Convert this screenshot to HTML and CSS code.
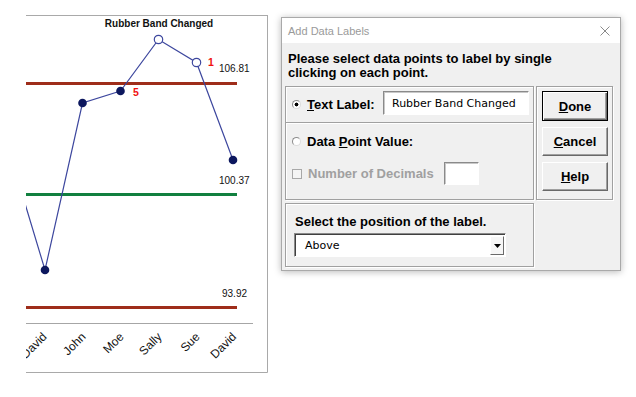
FILE: index.html
```html
<!DOCTYPE html>
<html>
<head>
<meta charset="utf-8">
<link rel="stylesheet" href="styles.css">
</head>
<body>
<svg class="chart" width="278" height="397" viewBox="0 0 278 397">
  <defs>
    <clipPath id="plot"><rect x="26" y="0" width="250" height="397"/></clipPath>
  </defs>
  <g class="frame">
    <line x1="26" y1="15.5" x2="267.5" y2="15.5"/>
    <line x1="267.5" y1="15" x2="267.5" y2="372.5"/>
    <line x1="26" y1="372.5" x2="267.5" y2="372.5"/>
  </g>
  <text class="title" x="159" y="27" text-anchor="middle">Rubber Band Changed</text>
  <line class="limit" x1="26" y1="83.5" x2="237" y2="83.5"/>
  <line class="center" x1="26" y1="194.5" x2="237" y2="194.5"/>
  <line class="limit" x1="26" y1="307.5" x2="237" y2="307.5"/>
  <line class="axis" x1="26" y1="323.5" x2="253" y2="323.5"/>
  <g clip-path="url(#plot)">
    <polyline class="series" points="7.4,145 45,270 82.5,103 120.5,91 158.5,39.5 196.5,62.5 233,160"/>
    <circle class="pt" cx="45" cy="270" r="4.3"/>
    <circle class="pt" cx="82.5" cy="103" r="4.3"/>
    <circle class="pt" cx="120.5" cy="91" r="4.3"/>
    <circle class="pt open" cx="158.5" cy="39.5" r="4.2"/>
    <circle class="pt open" cx="196.5" cy="62.5" r="4.2"/>
    <circle class="pt" cx="233" cy="160" r="4.3"/>
    <g class="xlabels">
      <text transform="translate(47.5,337.5) rotate(-45)" text-anchor="end">David</text>
      <text transform="translate(86.5,337.5) rotate(-45)" text-anchor="end">John</text>
      <text transform="translate(124.5,337.5) rotate(-45)" text-anchor="end">Moe</text>
      <text transform="translate(162.5,337.5) rotate(-45)" text-anchor="end">Sally</text>
      <text transform="translate(200.5,337.5) rotate(-45)" text-anchor="end">Sue</text>
      <text transform="translate(237,337.5) rotate(-45)" text-anchor="end">David</text>
    </g>
  </g>
  <text class="mark" x="208" y="66">1</text>
  <text class="mark" x="133" y="96">5</text>
  <text class="val" x="219" y="72">106.81</text>
  <text class="val" x="219" y="184">100.37</text>
  <text class="val" x="222" y="297">93.92</text>
</svg>

<div class="dialog">
  <div class="titlebar">
    <span class="title-text">Add Data Labels</span>
    <svg class="close" width="10" height="10" viewBox="0 0 10 10"><path d="M0.5 0.5 L9.5 9.5 M9.5 0.5 L0.5 9.5"/></svg>
  </div>
  <div class="content">
    <p class="prompt">Please select data points to label by single<br>clicking on each point.</p>
    <div class="panes">
      <div class="left">
        <div class="box box-text">
          <span class="radio checked"></span>
          <span class="lbl"><u>T</u>ext Label:</span>
          <span class="field field-text">Rubber Band Changed</span>
        </div>
        <div class="box box-value">
          <div class="row row-radio">
            <span class="radio"></span>
            <span class="lbl">Data <u>P</u>oint Value:</span>
          </div>
          <div class="row row-check">
            <span class="check"></span>
            <span class="lbl disabled">Number of Decimals</span>
            <span class="field field-dec"></span>
          </div>
        </div>
        <div class="box box-pos">
          <div class="lbl pos-label">Select the position of the label.</div>
          <div class="select">
            <span class="select-text">Above</span>
            <span class="drop"><svg width="7" height="4" viewBox="0 0 7 4"><path d="M0 0 H7 L3.5 4 Z"/></svg></span>
          </div>
        </div>
      </div>
      <div class="right">
        <div class="box box-buttons">
          <button class="btn default"><u>D</u>one</button>
          <button class="btn"><u>C</u>ancel</button>
          <button class="btn"><u>H</u>elp</button>
        </div>
      </div>
    </div>
  </div>
</div>
</body>
</html>
```

FILE: styles.css
```css
* { box-sizing: border-box; }

html, body {
  margin: 0;
  padding: 0;
  background: #ffffff;
}

body {
  display: flex;
  align-items: flex-start;
  width: 636px;
  height: 397px;
  overflow: hidden;
  font-family: "Liberation Sans", Arial, sans-serif;
}

/* ---------- chart ---------- */
.chart {
  display: block;
  flex: none;
  font-family: "Liberation Sans", Arial, sans-serif;
}
.chart .frame line { stroke: #a9a9a9; stroke-width: 1; }
.chart .title { font-size: 10px; font-weight: bold; fill: #111; }
.chart .limit { stroke: #9e2d1a; stroke-width: 3; }
.chart .center { stroke: #11803f; stroke-width: 3; }
.chart .axis { stroke: #a6a6a6; stroke-width: 1; }
.chart .series { fill: none; stroke: #3d479e; stroke-width: 1.2; }
.chart .pt { fill: #0c175e; stroke: none; }
.chart .pt.open { fill: #ffffff; stroke: #3d479e; stroke-width: 1.2; }
.chart .xlabels text { font-size: 12px; fill: #111; }
.chart .mark { font-size: 10.5px; font-weight: bold; fill: #f01010; }
.chart .val { font-size: 10px; fill: #111; }

/* ---------- dialog ---------- */
.dialog {
  flex: none;
  margin-left: 3px;
  margin-top: 17px;
  width: 340px;
  height: 254px;
  border: 1px solid #a9a9a9;
  background: #f0f0f0;
  box-shadow: 0 1px 7px rgba(0, 0, 0, 0.28);
}

.titlebar {
  height: 25px;
  background: #ffffff;
  display: flex;
  align-items: center;
  padding-left: 6px;
  padding-right: 10px;
}
.title-text {
  font-size: 11px;
  color: #9a9a9a;
}
.close {
  margin-left: auto;
  display: block;
}
.close path { stroke: #8a8a8a; stroke-width: 1; fill: none; }

.content {
  padding: 9px 7px 2px 3px;
}

.prompt {
  margin: 0 0 6px 0;
  padding-left: 3px;
  font-size: 13px;
  font-weight: bold;
  line-height: 14px;
  color: #000;
}

.panes {
  display: flex;
  gap: 2px;
}
.left {
  width: 249px;
  display: flex;
  flex-direction: column;
}
.right {
  width: 77px;
}

.box {
  border: 1px solid #a0a0a0;
  box-shadow: inset 1px 1px #ffffff, 1px 1px #ffffff;
}

.lbl {
  font-size: 13px;
  font-weight: bold;
  color: #000;
  white-space: nowrap;
}
.lbl.disabled { color: #a0a0a0; }

.radio {
  display: inline-block;
  flex: none;
  width: 9px;
  height: 9px;
  border-radius: 50%;
  border: 1px solid;
  border-color: #8c8c8c #dcdcdc #dcdcdc #8c8c8c;
  background: #ffffff;
}
.radio.checked {
  background: radial-gradient(circle, #000 0 1.7px, #ffffff 2.2px);
}

.check {
  display: inline-block;
  flex: none;
  width: 10px;
  height: 10px;
  border: 1px solid #a8a8a8;
  background: #f4f4f4;
}

.field {
  display: flex;
  align-items: center;
  background: #ffffff;
  border: 1px solid;
  border-color: #8a8a8a #ffffff #ffffff #8a8a8a;
  box-shadow: inset 1px 1px #c8c8c8;
  font-family: "DejaVu Sans", "Liberation Sans", sans-serif;
  font-size: 11px;
  color: #000;
}

.box-text {
  height: 37px;
  display: flex;
  align-items: center;
  padding: 0 4px 0 6px;
}
.box-text .radio { margin-right: 6px; }
.field-text {
  margin-left: auto;
  width: 146px;
  height: 24px;
  padding-left: 8px;
  margin-top: -3px;
}

.box-value {
  height: 77px;
  border-top: none;
  padding: 10px 4px 0 6px;
}
.row {
  display: flex;
  align-items: center;
}
.row-radio { height: 16px; }
.row-radio .radio { margin-right: 6px; }
.row-check { height: 23px; margin-top: 13px; }
.row-check .check { margin-right: 6px; }
.field-dec {
  width: 35px;
  height: 23px;
  margin-left: 10px;
}

.box-pos {
  height: 64px;
  margin-top: 3px;
  padding: 10px 8px 0 8px;
}
.pos-label {
  line-height: 16px;
  padding-left: 1px;
}
.select {
  margin-top: 3px;
  width: 212px;
  height: 24px;
  display: flex;
  align-items: stretch;
  background: #ffffff;
  border: 1px solid;
  border-color: #8a8a8a #ffffff #ffffff #8a8a8a;
  box-shadow: inset 1px 1px #404040;
}
.select-text {
  flex: 1;
  display: flex;
  align-items: center;
  padding-left: 10px;
  font-family: "DejaVu Sans", "Liberation Sans", sans-serif;
  font-size: 11px;
  color: #000;
}
.drop {
  width: 14px;
  margin: 2px 1px 1px 0;
  display: flex;
  align-items: center;
  justify-content: center;
  background: #f6f6f6;
  border: 1px solid;
  border-color: #ffffff #6a6a6a #6a6a6a #ffffff;
}
.drop path { fill: #000; }

.box-buttons {
  height: 114px;
  padding: 4px 0 0 5px;
  display: flex;
  flex-direction: column;
  gap: 6px;
}
.btn {
  width: 66px;
  height: 29px;
  padding: 0;
  margin: 0;
  background: #f0f0f0;
  font-family: "Liberation Sans", Arial, sans-serif;
  font-size: 13px;
  font-weight: bold;
  color: #000;
  border: 1px solid;
  border-color: #ffffff #696969 #696969 #ffffff;
  box-shadow: inset -1px -1px #a0a0a0;
}
.btn.default {
  height: 30px;
  border: 1px solid #000;
  box-shadow: inset 1px 1px #ffffff, inset -1px -1px #696969, inset -2px -2px #a0a0a0;
}
```
